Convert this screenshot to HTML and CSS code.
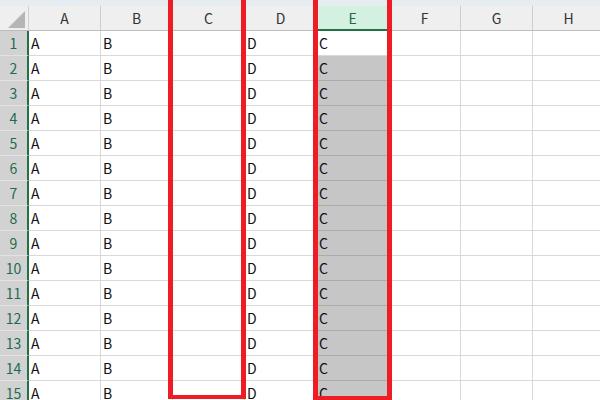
FILE: index.html
```html
<!DOCTYPE html>
<html lang="ja">
<head>
    <meta charset="UTF-8">
    <title>Sheet1</title>
    <link rel="stylesheet" href="styles.css">
</head>
<body>
    <div class="top-strip"></div>
    <div class="sheet">
        <div class="corner"><span class="corner-tri"></span></div>
        <div class="col-head">A</div>
        <div class="col-head">B</div>
        <div class="col-head">C</div>
        <div class="col-head">D</div>
        <div class="col-head selected">E</div>
        <div class="col-head">F</div>
        <div class="col-head">G</div>
        <div class="col-head">H</div>
    </div>
    <div class="sheet" id="rows"></div>

    <!-- highlight frames -->
    <div class="frame frame-c"></div>
    <div class="frame frame-e"></div>

    <script>
    const rows = document.getElementById("rows");
    for (let i = 1; i <= 15; i++) {
        rows.innerHTML += `
            <div class="row-head">${i}</div>
            <div class="cell">A</div>
            <div class="cell">B</div>
            <div class="cell"></div>
            <div class="cell">D</div>
            <div class="cell sel ${i === 1 ? 'active' : ''}">C</div>
            <div class="cell"></div>
            <div class="cell"></div>
            <div class="cell"></div>
        `;
    }
    </script>
</body>
</html>
```

FILE: styles.css
```css
body {
    margin: 0;
    padding: 0;
    width: 600px;
    height: 400px;
    overflow: hidden;
    position: relative;
    background-color: white;
    font-family: "Noto Sans CJK JP", "Noto Sans", sans-serif;
    font-size: 14px;
    color: #111;
}

.top-strip {
    height: 6px;
    background-color: #e6edf0;
}

.sheet {
    display: grid;
    grid-template-columns: 29px repeat(8, 72px);
    grid-auto-rows: 25px;
}

.sheet:first-of-type {
    grid-auto-rows: 24px;
}

.corner {
    background-color: #efefef;
    border-right: 1px solid #d0d0d0;
    border-bottom: 1px solid #bcbcbc;
    position: relative;
    box-sizing: border-box;
}

.corner-tri {
    position: absolute;
    right: 3px;
    bottom: 2px;
    width: 0;
    height: 0;
    border-left: 17px solid transparent;
    border-bottom: 17px solid #b5b5b5;
}

.col-head {
    background-color: #efefef;
    border-right: 1px solid #cdcdcd;
    border-bottom: 1px solid #bcbcbc;
    box-sizing: border-box;
    display: flex;
    align-items: center;
    justify-content: center;
    color: #333;
    line-height: 1;
}

.col-head.selected {
    background-color: #d3f0e0;
    color: #1e6b45;
    border-bottom: 2px solid #217346;
}

.row-head {
    background-color: #d2d2d2;
    border-right: 2px solid #217346;
    border-bottom: 1px solid #e2e2e2;
    box-sizing: border-box;
    display: flex;
    align-items: center;
    justify-content: center;
    color: #1e6b50;
    line-height: 1;
}

.cell {
    border-right: 1px solid #d9d9d9;
    border-bottom: 1px solid #d9d9d9;
    box-sizing: border-box;
    display: flex;
    align-items: center;
    padding-left: 2px;
    line-height: 1;
}

.cell.sel {
    background-color: #c6c6c6;
    border-bottom-color: #ababab;
    border-right-color: #ababab;
}

.cell.sel.active {
    background-color: white;
    border-bottom-color: #d9d9d9;
}

.frame {
    position: absolute;
    top: -6px;
    border: 5px solid #ee1c25;
    box-sizing: border-box;
}

.frame-c {
    left: 168px;
    width: 78px;
    height: 405px;
    border-bottom-width: 4px;
}

.frame-e {
    left: 313px;
    width: 79px;
    height: 406px;
    border-bottom-width: 4px;
}
```
